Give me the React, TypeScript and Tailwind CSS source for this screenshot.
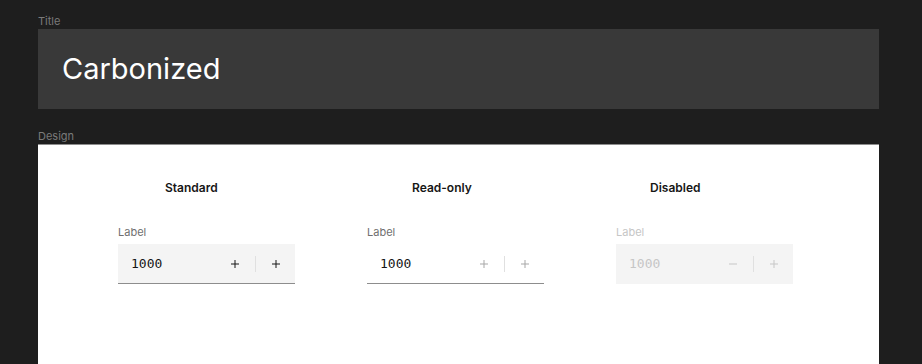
import React from 'react';

const AddIcon = ({ className }: { className?: string }) => (
  <svg viewBox="0 0 32 32" className={className} fill="currentColor">
    <path d="M17 15V8h-2v7H8v2h7v7h2v-7h7v-2z" />
  </svg>
);

const SubtractIcon = ({ className }: { className?: string }) => (
  <svg viewBox="0 0 32 32" className={className} fill="currentColor">
    <path d="M8 15h16v2H8z" />
  </svg>
);

type Variant = 'standard' | 'readonly' | 'disabled';

const NumberInput = ({ variant }: { variant: Variant }) => {
  const box =
    variant === 'standard'
      ? 'bg-[#f4f4f4] border-b border-[#8d8d8d]'
      : variant === 'readonly'
        ? 'bg-transparent border-b border-[#8d8d8d]'
        : 'bg-[#f4f4f4] border-b border-transparent';
  const textColor = variant === 'disabled' ? 'text-[#c6c6c6]' : 'text-[#161616]';
  const iconColor =
    variant === 'standard' ? 'text-[#161616]' : variant === 'readonly' ? 'text-[#a8a8a8]' : 'text-[#c6c6c6]';

  return (
    <div className="flex flex-col w-[177px]">
      <span className={`text-[11px] leading-4 mb-[4px] ${variant === 'disabled' ? 'text-[#c6c6c6]' : 'text-[#6f6f6f]'}`}>
        Label
      </span>
      <div className={`flex items-center h-[40px] ${box}`}>
        <span className={`flex-1 pl-[13px] pt-px text-[13px] ${textColor}`} style={{ fontFamily: '"DejaVu Sans Mono", "Liberation Mono", monospace' }}>
          1000
        </span>
        <div className={`w-[40px] h-full flex items-center justify-center ${iconColor}`}>
          {variant === 'disabled' ? <SubtractIcon className="w-4 h-4" /> : <AddIcon className="w-4 h-4" />}
        </div>
        <div className="w-px h-4 bg-[#e0e0e0]" />
        <div className={`w-[39px] h-full flex items-center justify-center ${iconColor}`}>
          <AddIcon className="w-4 h-4" />
        </div>
      </div>
    </div>
  );
};

const columns: { title: string; variant: Variant; headClass: string }[] = [
  { title: 'Standard', variant: 'standard', headClass: 'pl-[47px]' },
  { title: 'Read-only', variant: 'readonly', headClass: 'pl-[45px]' },
  { title: 'Disabled', variant: 'disabled', headClass: 'pl-[34px]' },
];

export default function App() {
  return (
    <div className="min-h-screen bg-[#1e1e1e] pl-[38px] pt-[13px]" style={{ fontFamily: 'Inter, "Noto Sans", sans-serif' }}>
      <div className="w-[841px]">
        {/* Title section */}
        <div className="text-[11px] leading-4 text-[#7a7a7a]">Title</div>
        <div className="h-[80px] bg-[#393939] flex items-center px-6">
          <span className="text-[29px] text-white">Carbonized</span>
        </div>

        {/* Design section */}
        <div className="text-[11px] leading-4 text-[#7a7a7a] mt-[19px]">Design</div>
        <div className="bg-white border-t border-[#8d8d8d] h-[220px] pt-[35px] pl-[80px] flex">
          {columns.map((col) => (
            <div key={col.title} className="w-[249px] flex flex-col">
              <div className={`text-[12px] font-semibold leading-4 text-[#161616] ${col.headClass}`}>{col.title}</div>
              <div className="mt-[28px]">
                <NumberInput variant={col.variant} />
              </div>
            </div>
          ))}
        </div>
      </div>
    </div>
  );
}
